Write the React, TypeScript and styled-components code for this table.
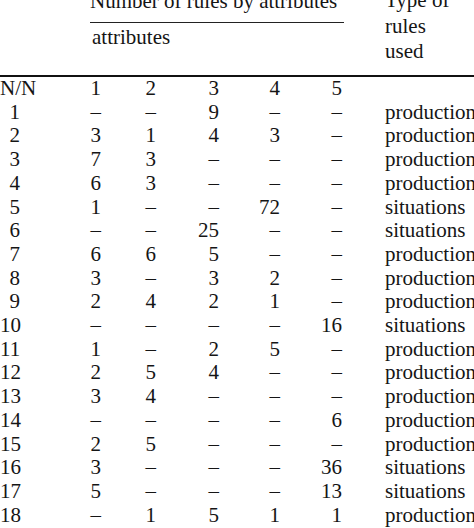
import React from 'react';
import styled, { createGlobalStyle } from 'styled-components';

const COLUMNS = '90px 11px 55px 63px 61px 62px 43px 1fr';

type RowData = [string, string, string, string, string, string];

const ROWS: RowData[] = [
  ['–', '–', '9', '–', '–', 'production'],
  ['3', '1', '4', '3', '–', 'production'],
  ['7', '3', '–', '–', '–', 'production'],
  ['6', '3', '–', '–', '–', 'production'],
  ['1', '–', '–', '72', '–', 'situations'],
  ['–', '–', '25', '–', '–', 'situations'],
  ['6', '6', '5', '–', '–', 'production'],
  ['3', '–', '3', '2', '–', 'production'],
  ['2', '4', '2', '1', '–', 'production'],
  ['–', '–', '–', '–', '16', 'situations'],
  ['1', '–', '2', '5', '–', 'production'],
  ['2', '5', '4', '–', '–', 'production'],
  ['3', '4', '–', '–', '–', 'production'],
  ['–', '–', '–', '–', '6', 'production'],
  ['2', '5', '–', '–', '–', 'production'],
  ['3', '–', '–', '–', '36', 'situations'],
  ['5', '–', '–', '–', '13', 'situations'],
  ['–', '1', '5', '1', '1', 'production'],
];

const GlobalStyle = createGlobalStyle`
  html, body {
    margin: 0;
    padding: 0;
    background: #fff;
    overflow: hidden;
    font-family: "Liberation Serif", "DejaVu Serif", serif;
  }
`;

const App: React.FC = () => {
  return (
    <>
      <GlobalStyle />
      <Page>
        <Header>
          <Spanner>
            <SpannerTitle>Number of rules by attributes</SpannerTitle>
            <ThinRule />
            <SubHead>attributes</SubHead>
          </Spanner>
          <TypeHead>
            Type of
            <br />
            rules
            <br />
            used
          </TypeHead>
        </Header>
        <ThickRule />
        <Row>
          <Stub $align='left'>N/N</Stub>
          {['1', '2', '3', '4', '5'].map(n => (
            <Num key={n}>{n}</Num>
          ))}
          <Gap />
          <TypeCell />
        </Row>
        {ROWS.map((row, i) => (
          <Row key={i}>
            <Stub $align='right'>{i + 1}</Stub>
            {row.slice(0, 5).map((value, j) => (
              <Num key={j}>{value}</Num>
            ))}
            <Gap />
            <TypeCell>{row[5]}</TypeCell>
          </Row>
        ))}
      </Page>
    </>
  );
};

export default App;

const Page = styled.div`
  width: 474px;
  margin-top: -12px;
  overflow: hidden;
  font-family: "Liberation Serif", "DejaVu Serif", serif;
  font-size: 21px;
  color: #151515;
`;

const Header = styled.div`
  display: grid;
  grid-template-columns: ${COLUMNS};
`;

const Spanner = styled.div`
  grid-column: 2 / 7;
  padding-top: 1px;
  display: flex;
  flex-direction: column;
`;

const SpannerTitle = styled.div`
  line-height: 24px;
  white-space: nowrap;
`;

const ThinRule = styled.div`
  height: 1px;
  margin: 9px -2px 0 0;
  background: #222;
`;

const SubHead = styled.div`
  margin-top: 2px;
  line-height: 24px;
  padding-left: 2px;
`;

const TypeHead = styled.div`
  grid-column: 8;
  line-height: 25.5px;
  white-space: nowrap;
`;

const ThickRule = styled.div`
  height: 2px;
  margin-top: 10.5px;
  background: #111;
`;

const Row = styled.div`
  display: grid;
  grid-template-columns: ${COLUMNS};
  line-height: 23.7px;
  white-space: nowrap;
`;

const Stub = styled.div<{ $align: 'left' | 'right' }>`
  text-align: ${p => p.$align};
  padding-right: ${p => (p.$align === 'right' ? '70px' : '0')};
`;

const Num = styled.div`
  text-align: right;
`;

const Gap = styled.div``;

const TypeCell = styled.div`
  overflow: visible;
`;
